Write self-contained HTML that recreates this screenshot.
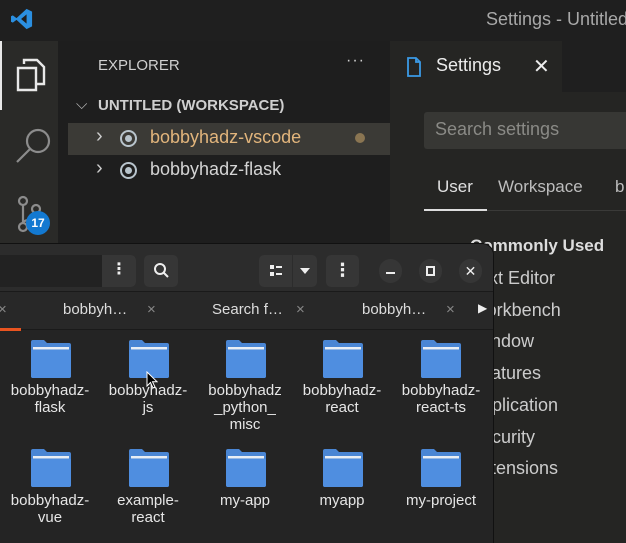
<!DOCTYPE html><html><head><style>
body{margin:0;width:626px;height:537px;overflow:hidden;background:#252523;font-family:"Liberation Sans","DejaVu Sans",sans-serif;position:relative}
div{position:absolute;box-sizing:border-box}
.t{white-space:nowrap}
</style></head><body>
<div style="left:0;top:0;width:626px;height:41px;background:#1f1f1f"></div>
<svg style="position:absolute;left:11px;top:8px" width="22" height="22" viewBox="0 0 24 24"><path d="M17 1 L23 4 V20 L17 23 L6 13 L2 16 L0 15 V9 L2 8 L6 11 L17 1Z M17 7 L11 12 L17 17Z" fill="#2b8fe0" fill-rule="evenodd"/></svg>
<div class="t" style="left:486px;top:9px;color:#a8a8a8;font-size:18px">Settings - Untitled</div>
<div style="left:0;top:41px;width:58px;height:496px;background:#2a2a28"></div>
<div style="left:0;top:41px;width:2px;height:69px;background:#e8e8e8"></div>
<svg style="position:absolute;left:14px;top:56px" width="36" height="36" viewBox="0 0 36 36" fill="none" stroke="#e8e8e8" stroke-width="2.4"><path d="M10 8V4h13l7 7v17h-7"/><path d="M4 12h18v22H4z" fill="#2a2a28"/></svg>
<svg style="position:absolute;left:14px;top:126px" width="40" height="40" viewBox="0 0 40 40" fill="none" stroke="#8c8c8c" stroke-width="2.2"><circle cx="24" cy="15" r="11"/><path d="M16 23L3 36"/></svg>
<svg style="position:absolute;left:14px;top:195px" width="34" height="40" viewBox="0 0 34 40" fill="none" stroke="#8c8c8c" stroke-width="2.2"><circle cx="9" cy="6" r="4"/><circle cx="22" cy="14" r="4"/><circle cx="9" cy="32" r="4"/><path d="M9 10v18M22 18c0 8-13 6-13 10"/></svg>
<div style="left:26px;top:211px;width:24px;height:24px;border-radius:12px;background:#1379d1;color:#fff;font-size:12px;font-weight:bold;text-align:center;line-height:24px">17</div>
<div style="left:58px;top:41px;width:332px;height:496px;background:#1e1e1e"></div>
<div class="t" style="left:98px;top:57px;color:#cfcfcf;font-size:15px">EXPLORER</div>
<div class="t" style="left:346px;top:52px;color:#cfcfcf;font-size:16px;letter-spacing:1px">···</div>
<div class="t" style="left:76px;top:96px;color:#bbb;font-size:15px">⌵</div>
<div class="t" style="left:98px;top:97px;color:#cfcfcf;font-size:15px;font-weight:bold">UNTITLED (WORKSPACE)</div>
<div style="left:68px;top:123px;width:322px;height:32px;background:#3b3a36"></div>
<div class="t" style="left:96px;top:125px;color:#ccc;font-size:20px">›</div>
<div style="left:120px;top:130px;width:17px;height:17px;border:2px solid #b8c4cc;border-radius:50%"></div>
<div style="left:125px;top:135px;width:7px;height:7px;background:#b8c4cc;border-radius:50%"></div>
<div class="t" style="left:150px;top:127px;color:#e2b57c;font-size:18px">bobbyhadz-vscode</div>
<div style="left:355px;top:133px;width:10px;height:10px;border-radius:5px;background:#8a7552"></div>
<div class="t" style="left:96px;top:157px;color:#ccc;font-size:20px">›</div>
<div style="left:120px;top:162px;width:17px;height:17px;border:2px solid #b8c4cc;border-radius:50%"></div>
<div style="left:125px;top:167px;width:7px;height:7px;background:#b8c4cc;border-radius:50%"></div>
<div class="t" style="left:150px;top:159px;color:#d4d4d4;font-size:18px">bobbyhadz-flask</div>
<div style="left:390px;top:41px;width:236px;height:51px;background:#1f1f1f"></div>
<div style="left:390px;top:41px;width:172px;height:51px;background:#252523"></div>
<svg style="position:absolute;left:407px;top:57px" width="14" height="20" viewBox="0 0 14 20" fill="none" stroke="#3b9ae6" stroke-width="1.8"><path d="M1 1h8l4 4v14H1z M9 1v4h4"/></svg>
<div class="t" style="left:436px;top:55px;color:#ececec;font-size:18px">Settings</div>
<div class="t" style="left:533px;top:54px;color:#ececec;font-size:20px">✕</div>
<div style="left:424px;top:112px;width:210px;height:37px;background:#373734;border-radius:3px"></div>
<div class="t" style="left:435px;top:119px;color:#8a8a86;font-size:18px">Search settings</div>
<div class="t" style="left:437px;top:177px;color:#e0e0e0;font-size:17px">User</div>
<div class="t" style="left:498px;top:177px;color:#bdbdbd;font-size:17px">Workspace</div>
<div class="t" style="left:615px;top:177px;color:#bdbdbd;font-size:17px">b</div>
<div style="left:424px;top:210px;width:202px;height:1px;background:#3a3a38"></div>
<div style="left:424px;top:209px;width:63px;height:2px;background:#ddd"></div>
<div class="t" style="left:470px;top:236px;color:#ddd;font-size:17px;font-weight:bold">Commonly Used</div>
<div class="t" style="left:470px;top:263px;color:#ccc;font-size:18px;line-height:31.7px">Text Editor<br>Workbench<br>Window<br>Features<br>Application<br>Security<br>Extensions</div>
<!-- nautilus -->
<div style="left:0;top:243px;width:494px;height:300px;background:#242424;border-right:1px solid #111;border-top:1px solid #111;border-radius:0 12px 0 0;overflow:hidden">
<div style="left:0;top:0;width:494px;height:48px;background:#2c2c2c;border-bottom:1px solid #1a1a1a"></div>
<div style="left:0;top:11px;width:136px;height:32px;background:#222;border-radius:0 5px 5px 0"></div>
<div style="left:102px;top:11px;width:34px;height:32px;background:#363636;border-radius:0 5px 5px 0;color:#eee;text-align:center;font-size:16px;line-height:30px;font-weight:bold">⋮</div>
<div style="left:144px;top:11px;width:34px;height:32px;background:#363636;border-radius:5px"></div>
<svg style="position:absolute;left:153px;top:18px" width="17" height="17" viewBox="0 0 17 17" fill="none" stroke="#eee" stroke-width="2"><circle cx="7" cy="7" r="5"/><path d="M10.5 10.5L15 15"/></svg>
<div style="left:259px;top:11px;width:33px;height:32px;background:#363636;border-radius:5px 0 0 5px"></div>
<div style="left:270px;top:21px;width:4px;height:4px;background:#eee"></div><div style="left:276px;top:22px;width:6px;height:2px;background:#eee"></div>
<div style="left:270px;top:28px;width:4px;height:4px;background:#eee"></div><div style="left:276px;top:29px;width:6px;height:2px;background:#eee"></div>
<div style="left:293px;top:11px;width:24px;height:32px;background:#363636;border-radius:0 5px 5px 0"></div>
<svg style="position:absolute;left:300px;top:24px" width="10" height="6"><path d="M0 0h10L5 6z" fill="#eee"/></svg>
<div style="left:326px;top:11px;width:33px;height:32px;background:#363636;border-radius:5px;color:#eee;text-align:center;font-size:18px;line-height:30px;font-weight:bold">⋮</div>
<div style="left:379px;top:15px;width:23px;height:24px;border-radius:12px;background:#363636"></div>
<div style="left:386px;top:28px;width:9px;height:2px;background:#eee"></div>
<div style="left:419px;top:15px;width:23px;height:24px;border-radius:12px;background:#363636"></div>
<div style="left:426px;top:22px;width:9px;height:10px;border:2px solid #eee"></div>
<div style="left:459px;top:15px;width:23px;height:24px;border-radius:12px;background:#363636;color:#eee;text-align:center;font-size:14px;line-height:24px;font-weight:bold">✕</div>
<div style="left:0;top:48px;width:494px;height:38px;background:#282828;border-bottom:1px solid #1a1a1a"></div>
<div style="left:0;top:84px;width:21px;height:3px;background:#e95420"></div>
<div class="t" style="left:-2px;top:57px;color:#888;font-size:15px">×</div>
<div class="t" style="left:63px;top:57px;color:#ddd;font-size:15px">bobbyh…</div>
<div class="t" style="left:147px;top:57px;color:#888;font-size:15px">×</div>
<div class="t" style="left:212px;top:57px;color:#ddd;font-size:15px">Search f…</div>
<div class="t" style="left:296px;top:57px;color:#888;font-size:15px">×</div>
<div class="t" style="left:362px;top:57px;color:#ddd;font-size:15px">bobbyh…</div>
<div class="t" style="left:446px;top:57px;color:#888;font-size:15px">×</div>
<div class="t" style="left:478px;top:57px;color:#eee;font-size:12px">▶</div>
</div>
<svg width="0" height="0" style="position:absolute"><defs><symbol id="f" viewBox="0 0 40 40"><path d="M0 3a2 2 0 0 1 2-2h11l3 3h22a2 2 0 0 1 2 2v31a2 2 0 0 1-2 2H2a2 2 0 0 1-2-2z" fill="#4a86d4"/><rect x="2" y="8" width="36" height="2.5" fill="#e8eef5"/><path d="M0 11h40v26a2 2 0 0 1-2 2H2a2 2 0 0 1-2-2z" fill="#4f8ee0"/></symbol></defs></svg>
<svg style="position:absolute;left:31px;top:339px" width="40" height="40"><use href="#f"/></svg>
<svg style="position:absolute;left:129px;top:339px" width="40" height="40"><use href="#f"/></svg>
<svg style="position:absolute;left:226px;top:339px" width="40" height="40"><use href="#f"/></svg>
<svg style="position:absolute;left:323px;top:339px" width="40" height="40"><use href="#f"/></svg>
<svg style="position:absolute;left:421px;top:339px" width="40" height="40"><use href="#f"/></svg>
<svg style="position:absolute;left:31px;top:448px" width="40" height="40"><use href="#f"/></svg>
<svg style="position:absolute;left:129px;top:448px" width="40" height="40"><use href="#f"/></svg>
<svg style="position:absolute;left:226px;top:448px" width="40" height="40"><use href="#f"/></svg>
<svg style="position:absolute;left:323px;top:448px" width="40" height="40"><use href="#f"/></svg>
<svg style="position:absolute;left:421px;top:448px" width="40" height="40"><use href="#f"/></svg>
<div style="left:0;top:382px;width:492px;color:#e6e6e6;font-size:15px;line-height:17px;text-align:center">
<div style="left:2px;width:96px">bobbyhadz-<br>flask</div>
<div style="left:100px;width:96px">bobbyhadz-<br>js</div>
<div style="left:197px;width:96px">bobbyhadz<br>_python_<br>misc</div>
<div style="left:294px;width:96px">bobbyhadz-<br>react</div>
<div style="left:393px;width:96px">bobbyhadz-<br>react-ts</div>
</div>
<div style="left:0;top:492px;width:492px;color:#e6e6e6;font-size:15px;line-height:17px;text-align:center">
<div style="left:2px;width:96px">bobbyhadz-<br>vue</div>
<div style="left:100px;width:96px">example-<br>react</div>
<div style="left:197px;width:96px">my-app</div>
<div style="left:294px;width:96px">myapp</div>
<div style="left:393px;width:96px">my-project</div>
</div>
<svg style="position:absolute;left:146px;top:371px" width="12" height="18" viewBox="0 0 12 18"><path d="M1 1v14l3.5-3.5 2.5 5.5 2-1-2.5-5.3H11z" fill="#000" stroke="#fff" stroke-width="1"/></svg>
</body></html>
